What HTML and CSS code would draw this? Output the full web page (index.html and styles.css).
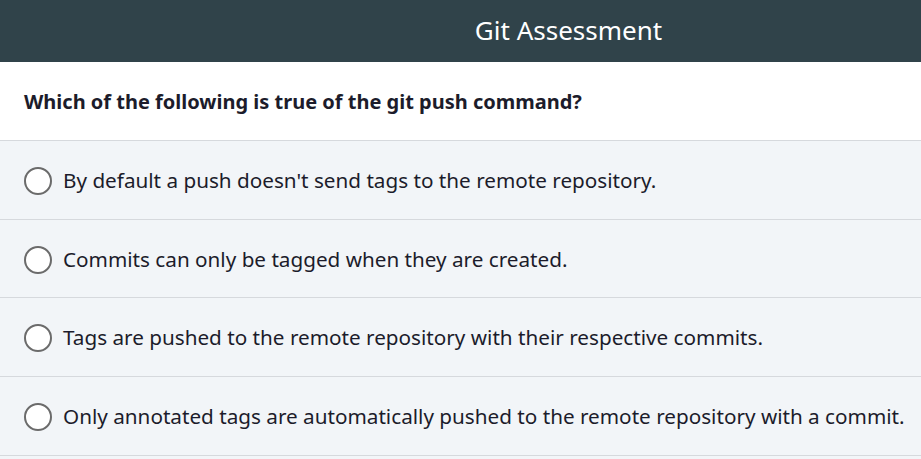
FILE: index.html
```html
<!DOCTYPE html>
<html lang="en">
<head>
    <meta charset="UTF-8">
    <meta name="viewport" content="width=device-width, initial-scale=1.0">
    <title>Git Assessment</title>

    <link rel="stylesheet" href="styles.css">
</head>
<body>
    <div id="header">
        <div id="title">Git Assessment</div>
    </div>

    <div id="question">
        Which of the following is true of the git push command?
    </div>

    <div id="answers">
        <label class="answer">
            <span class="radio"></span>
            <span class="text">By default a push doesn't send tags to the remote repository.</span>
        </label>
        <label class="answer">
            <span class="radio"></span>
            <span class="text">Commits can only be tagged when they are created.</span>
        </label>
        <label class="answer">
            <span class="radio"></span>
            <span class="text">Tags are pushed to the remote repository with their respective commits.</span>
        </label>
        <label class="answer">
            <span class="radio"></span>
            <span class="text">Only annotated tags are automatically pushed to the remote repository with a commit.</span>
        </label>
    </div>
</body>
</html>
```

FILE: styles.css
```css
html, body {
    height: 100%;
    overflow: hidden;
}

body {
    padding: 0;
    margin: 0;
    background-color: #f2f5f8;
    font-family: "Noto Sans", "Open Sans", sans-serif;
    color: #1c1c2b;
}

#header {
    height: 62px;
    background: #30434a;
    display: flex;
    align-items: center;
    justify-content: center;
    padding-left: 216px;
}

#title {
    color: white;
    font-size: 26px;
    margin-top: -2px;
}

#question {
    background: white;
    height: 79px;
    box-sizing: border-box;
    padding: 0 24px;
    display: flex;
    align-items: center;
    font-size: 20px;
    font-weight: bold;
    border-bottom: 1px solid #d6d9dd;
}

#answers {
    display: flex;
    flex-direction: column;
}

.answer {
    height: 78.7px;
    box-sizing: border-box;
    display: flex;
    align-items: center;
    gap: 11px;
    padding: 0 24px;
    border-bottom: 1px solid #d6d9dd;
    font-size: 20.7px;
    white-space: nowrap;
    cursor: pointer;
}

.radio {
    width: 28px;
    height: 28px;
    box-sizing: border-box;
    border: 2px solid #6b6b6b;
    border-radius: 50%;
    background: white;
    flex-shrink: 0;
    margin-top: 2px;
}
```
